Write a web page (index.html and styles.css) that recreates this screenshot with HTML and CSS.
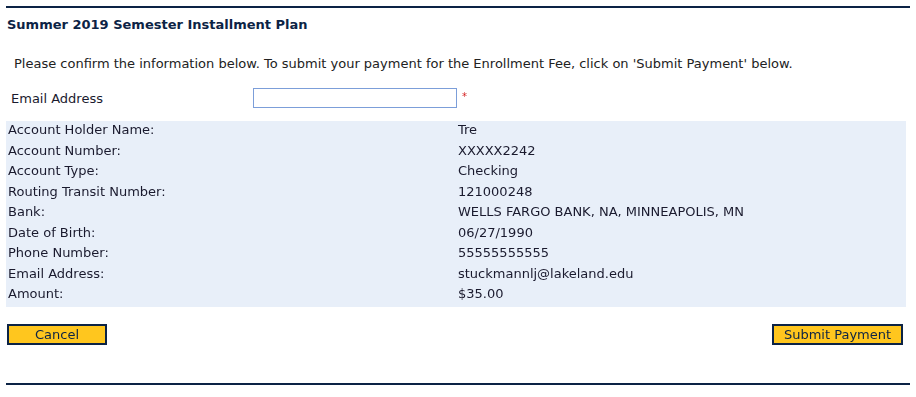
FILE: index.html
```html
<!DOCTYPE html>
<html lang="en">
<head>
    <meta charset="UTF-8">
    <title>Confirm Payment</title>
    <link rel="stylesheet" href="styles.css">
</head>
<body>

    <div class="page">
        <h2 class="plan-title">Summer 2019 Semester Installment Plan</h2>

        <p class="intro">Please confirm the information below. To submit your payment for the Enrollment Fee, click on 'Submit Payment' below.</p>

        <div class="email-row">
            <label class="email-label" for="email">Email Address</label>
            <input type="text" id="email" class="email-input" autofocus>
            <span class="required">*</span>
        </div>

        <table class="details">
            <tr><td>Account Holder Name:</td><td>Tre</td></tr>
            <tr><td>Account Number:</td><td>XXXXX2242</td></tr>
            <tr><td>Account Type:</td><td>Checking</td></tr>
            <tr><td>Routing Transit Number:</td><td>121000248</td></tr>
            <tr><td>Bank:</td><td>WELLS FARGO BANK, NA, MINNEAPOLIS, MN</td></tr>
            <tr><td>Date of Birth:</td><td>06/27/1990</td></tr>
            <tr><td>Phone Number:</td><td>55555555555</td></tr>
            <tr><td>Email Address:</td><td>stuckmannlj@lakeland.edu</td></tr>
            <tr><td>Amount:</td><td>$35.00</td></tr>
        </table>

        <div class="actions">
            <button class="btn btn-cancel">Cancel</button>
            <button class="btn btn-submit">Submit Payment</button>
        </div>
    </div>

</body>
</html>
```

FILE: styles.css
```css
body {
    margin: 0;
    padding: 6px 6px 0 6px;
    font-family: 'DejaVu Sans', Verdana, sans-serif;
    font-size: 13px;
    line-height: 15px;
    color: #1a1a2e;
    background: #ffffff;
}

.page {
    width: 904px;
    border-top: 2px solid #0c2345;
    border-bottom: 2px solid #0c2345;
}

.plan-title {
    margin: 9px 0 0 1px;
    font-size: 13px;
    line-height: 15px;
    font-weight: bold;
    color: #0c2345;
}

.intro {
    margin: 24px 0 0 8px;
    color: #222;
}

.email-row {
    display: flex;
    align-items: center;
    margin-top: 17px;
    height: 20px;
}

.email-label {
    width: 242px;
    padding-left: 5px;
}

.email-input {
    width: 204px;
    height: 20px;
    box-sizing: border-box;
    margin: 0;
    padding: 0 0 0 2px;
    border: 1px solid #7c9ed9;
    font-family: inherit;
    font-size: 13px;
    outline: none;
}

.required {
    margin-left: 5px;
    color: #d41c1c;
    font-size: 10px;
    line-height: 10px;
    align-self: flex-start;
    margin-top: 4px;
}

.details {
    width: 900px;
    margin-top: 13px;
    border-collapse: collapse;
    background-color: #e8eff9;
}

.details td {
    padding: 0 2px;
    height: 20.5px;
    line-height: 16px;
    vertical-align: top;
}

.details td:first-child {
    width: 446px;
}

.details tr:first-child td {
    padding-top: 1px;
}

.actions {
    display: flex;
    justify-content: space-between;
    margin: 17px 7px 38px 1px;
}

.btn {
    height: 21px;
    padding: 0;
    background-color: #ffc61e;
    border: 2px solid #0c2345;
    font-family: inherit;
    font-size: 13px;
    color: #0c2345;
    cursor: pointer;
}

.btn-cancel {
    width: 100px;
}

.btn-submit {
    width: 131px;
}
```
